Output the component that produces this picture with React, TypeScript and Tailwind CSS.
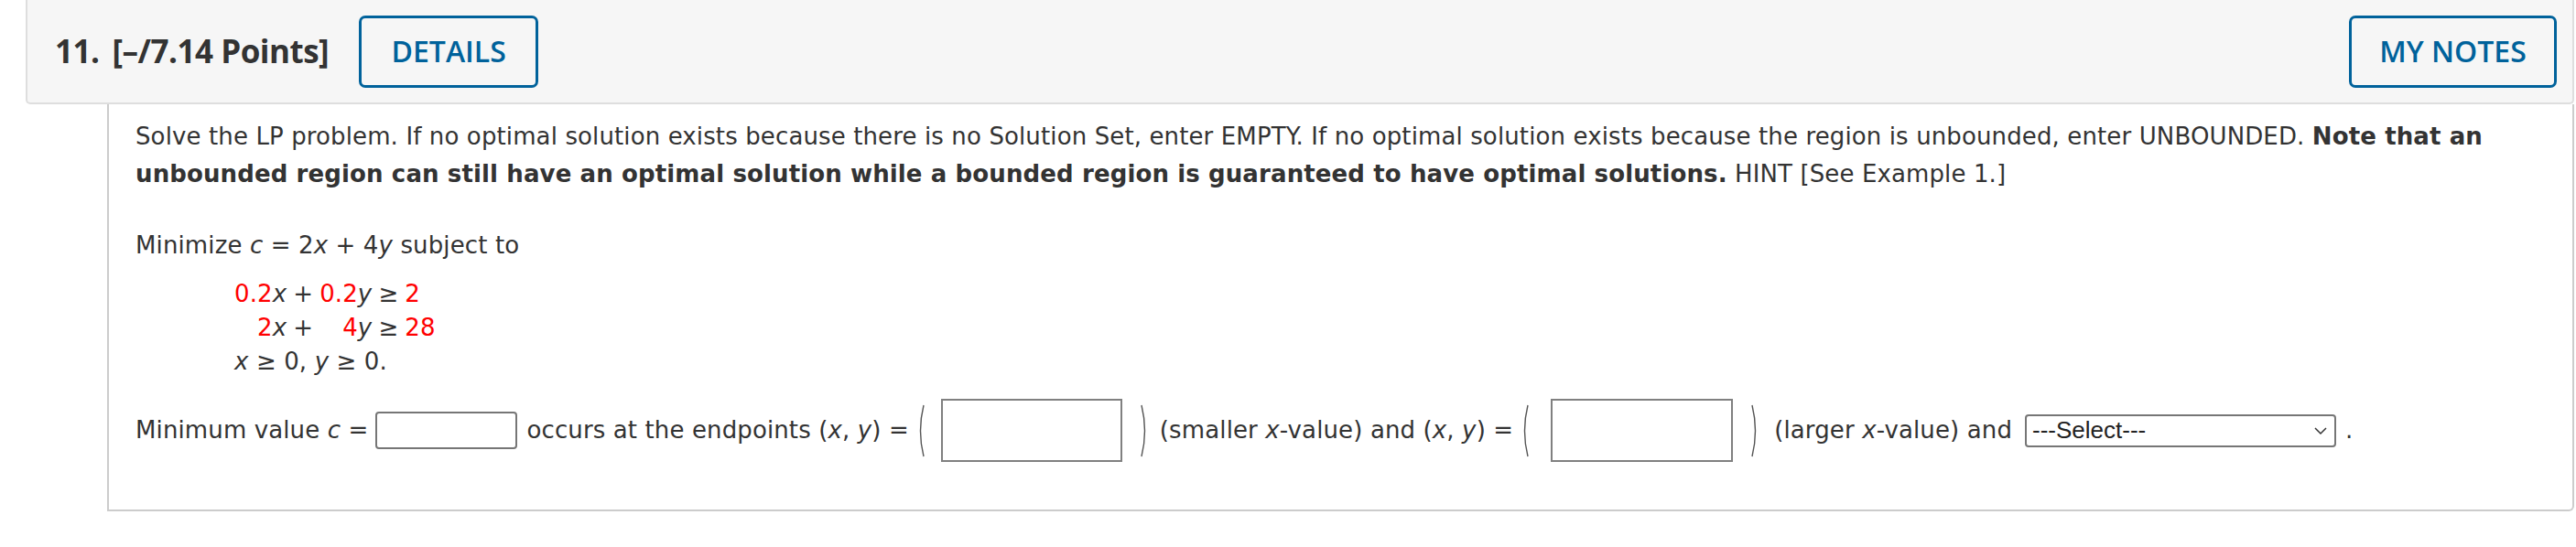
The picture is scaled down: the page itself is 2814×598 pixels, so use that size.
import React from "react";

const body = { fontFamily: '"DejaVu Sans", Verdana, sans-serif' };

function Paren({ side }: { side: "l" | "r" }) {
  return (
    <svg width="10" height="58" viewBox="0 0 10 58" className="shrink-0">
      {side === "l" ? (
        <path d="M8 1 Q1 29 8 57" fill="none" stroke="#555" strokeWidth="1.4" />
      ) : (
        <path d="M2 1 Q9 29 2 57" fill="none" stroke="#555" strokeWidth="1.4" />
      )}
    </svg>
  );
}

const V = ({ children }: { children: React.ReactNode }) => <i>{children}</i>;
const R = ({ children }: { children: React.ReactNode }) => <span className="text-[#ff0000]">{children}</span>;

export default function App() {
  return (
    <div className="w-[2814px] h-[598px] bg-white text-[#333333]">
      {/* Question header */}
      <div
        className="ml-[28px] mr-[2px] h-[114px] flex items-center bg-[#f6f6f6] border-x-2 border-b-2 border-[#dedede] rounded-b-[5px] pl-[30px] pr-[17px]"
        style={{ fontFamily: '"Open Sans", sans-serif' }}
      >
        <span className="text-[35px] font-bold text-[#333333] tracking-[-0.5px]">11.</span>
        <span className="ml-[14px] text-[35px] font-bold text-[#333333] tracking-[-0.5px]">[–/7.14 Points]</span>
        <button className="ml-[33px] w-[196px] h-[79px] border-[3px] border-[#00629b] rounded-[7px] text-[32px] font-semibold text-[#00629b]">
          DETAILS
        </button>
        <div className="flex-1" />
        <button className="w-[227px] h-[79px] border-[3px] border-[#00629b] rounded-[7px] text-[32px] font-semibold text-[#00629b]">
          MY NOTES
        </button>
      </div>

      {/* Question body */}
      <div
        className="ml-[117px] mr-[2px] border-x-2 border-b-2 border-[#cccccc] rounded-br-[6px] pl-[29px] pt-[15px] pb-[52px] text-[26px] tracking-[0.12px]"
        style={body}
      >
        <p className="leading-[41px] whitespace-nowrap">
          Solve the LP problem. If no optimal solution exists because there is no Solution Set, enter EMPTY. If no optimal solution exists because the region is unbounded, enter UNBOUNDED. <b>Note that an</b>
          <br />
          <b>unbounded region can still have an optimal solution while a bounded region is guaranteed to have optimal solutions.</b> HINT [See Example 1.]
        </p>

        <p className="mt-[37px] leading-[41px]">
          Minimize <V>c</V> = 2<V>x</V> + 4<V>y</V> subject to
        </p>

        <div className="mt-[14px] ml-[108px] grid grid-cols-[auto_auto_auto_auto_auto] justify-start gap-x-[7px] leading-[37px]">
          <span className="text-right"><R>0.2</R><V>x</V></span>
          <span>+</span>
          <span className="text-right"><R>0.2</R><V>y</V></span>
          <span>≥</span>
          <span><R>2</R></span>

          <span className="text-right"><R>2</R><V>x</V></span>
          <span>+</span>
          <span className="text-right"><R>4</R><V>y</V></span>
          <span>≥</span>
          <span><R>28</R></span>

          <span className="col-span-5">
            <V>x</V> ≥ 0, <V>y</V> ≥ 0.
          </span>
        </div>

        <div className="mt-[22px] flex items-center whitespace-nowrap">
          <span>
            Minimum value <V>c</V> =
          </span>
          <div className="ml-[8px] w-[155px] h-[41px] border-2 border-[#767676] rounded-[4px] bg-white" />
          <span className="ml-[10px]">
            occurs at the endpoints (<V>x</V>, <V>y</V>) =
          </span>
          <div className="ml-[8px]">
            <Paren side="l" />
          </div>
          <div className="ml-[17px] w-[198px] h-[69px] border-2 border-[#808080] bg-white" />
          <div className="ml-[19px]">
            <Paren side="r" />
          </div>
          <span className="ml-[12px]">
            (smaller <V>x</V>-value) and (<V>x</V>, <V>y</V>) =
          </span>
          <div className="ml-[8px]">
            <Paren side="l" />
          </div>
          <div className="ml-[23px] w-[199px] h-[69px] border-2 border-[#808080] bg-white" />
          <div className="ml-[19px]">
            <Paren side="r" />
          </div>
          <span className="ml-[16px]">
            (larger <V>x</V>-value) and
          </span>
          <div
            className="ml-[14px] w-[340px] h-[36px] border-2 border-[#767676] rounded-[4px] bg-white flex items-center justify-between pl-[6px] pr-[8px] text-[26px] tracking-normal text-[#222222]"
            style={{ fontFamily: '"Liberation Sans", Arial, sans-serif' }}
          >
            <span>---Select---</span>
            <svg width="14" height="10" viewBox="0 0 14 10">
              <path d="M1 2 L7 8 L13 2" fill="none" stroke="#333" strokeWidth="1.5" />
            </svg>
          </div>
          <span className="ml-[10px]">.</span>
        </div>
      </div>
    </div>
  );
}
